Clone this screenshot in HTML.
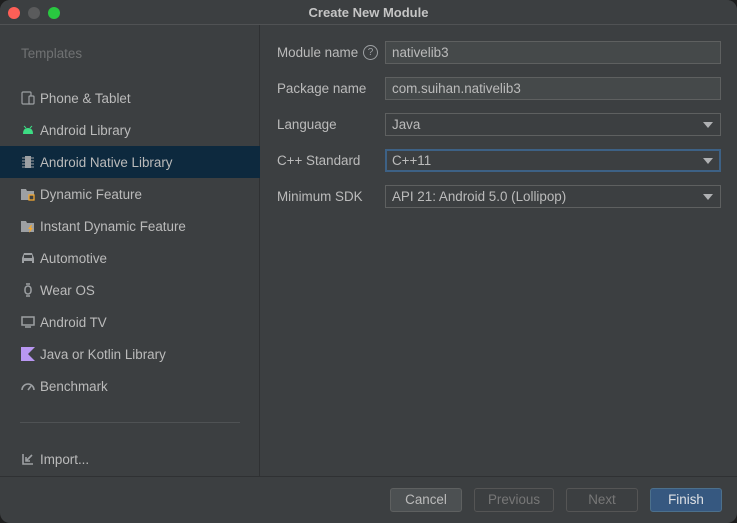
<!DOCTYPE html>
<html><head><style>
*{margin:0;padding:0;box-sizing:border-box}
body{width:737px;height:523px;background:#1e1e1e;font-family:"Liberation Sans",sans-serif;font-size:13px;color:#bbbbbb;overflow:hidden}
.win{position:absolute;left:0;top:0;width:737px;height:523px;background:#3c3f41;border-radius:10px;overflow:hidden}
.title{position:absolute;left:0;top:0;width:737px;height:25px;background:#3c3f41;border-bottom:1px solid #505254;text-align:center;line-height:25px;font-weight:bold;color:#c5c5c5;font-size:13px}
.dot{position:absolute;top:7px;width:12px;height:12px;border-radius:50%}
.left{position:absolute;left:0;top:25px;width:260px;height:451px;border-right:1px solid #2f3133}
.item{position:absolute;left:0;width:260px;height:32px;line-height:33px;padding-left:40px;color:#bbbbbb;font-size:13.4px}
.item.sel{background:#0d293e}
.ic{position:absolute;left:21px;top:9px;width:14px;height:14px}
.lbl{position:absolute;left:277px;height:23px;line-height:24px;font-size:13.4px}
.f{position:absolute;left:385px;width:336px;height:23px;border:1px solid #5e6060;background:#45494a;line-height:22px;padding-left:6px;color:#bbbbbb;font-size:13.4px}
.f.dd{background:#3c3f41}
.f.dd:after{content:"";position:absolute;right:7px;top:8px;border-left:5px solid transparent;border-right:5px solid transparent;border-top:6px solid #afb1b3}
.f.foc{border:2px solid #3d6185;line-height:20px;padding-left:5px}
.f.foc:after{right:6px;top:7px}
.bottom{position:absolute;left:0;top:476px;width:737px;height:47px;border-top:1px solid #2f3133}
.btn{position:absolute;top:488px;height:24px;border:1px solid #5e6060;border-radius:3px;text-align:center;line-height:22px;background:#4c5052;color:#bbbbbb;font-size:13.4px}
.btn.dis{background:#3c3f41;color:#777;border-color:#555}
.btn.pri{background:#365880;border-color:#4c708c;color:#dfe1e5}
.help{position:absolute;left:363px;top:45px;width:15px;height:15px;border:1px solid #9da0a3;border-radius:50%;font-size:10px;line-height:13px;text-align:center;color:#9da0a3}
</style></head><body>
<div class="win">
<div class="title">Create New Module</div>
<div class="dot" style="left:8px;background:#fe5f57"></div>
<div class="dot" style="left:28px;background:#5a5b5c"></div>
<div class="dot" style="left:48px;background:#29c840"></div>
<div class="left">
<div style="position:absolute;left:21px;top:21px;color:#707273;font-size:13.4px">Templates</div>
</div>
<div class="item" style="top:82px"><svg class="ic" viewBox="0 0 14 14"><rect x="1" y="1" width="9" height="12" rx="1" fill="none" stroke="#9da0a3" stroke-width="1.2"/><rect x="8" y="5" width="5" height="8" rx="1" fill="#3c3f41" stroke="#9da0a3" stroke-width="1.2"/></svg>Phone &amp; Tablet</div>
<div class="item" style="top:114px"><svg class="ic" viewBox="0 0 14 14"><path d="M2 11 Q2 5 7 5 Q12 5 12 11Z" fill="#3ddc84"/><path d="M3 3l2 2M11 3l-2 2" stroke="#3ddc84"/></svg>Android Library</div>
<div class="item sel" style="top:146px"><svg class="ic" viewBox="0 0 14 14"><rect x="4" y="1" width="6" height="12" fill="#9da0a3"/><path d="M1 3h12M1 6h12M1 9h12M1 12h12" stroke="#9da0a3" stroke-width="1"/></svg>Android Native Library</div>
<div class="item" style="top:178px"><svg class="ic" viewBox="0 0 14 14"><path d="M0 2h5l1 2h7v9H0z" fill="#9da0a3"/><rect x="8" y="8" width="5" height="5" fill="#3c3f41" stroke="#f0a732" stroke-width="1.3"/></svg>Dynamic Feature</div>
<div class="item" style="top:210px"><svg class="ic" viewBox="0 0 14 14"><path d="M0 2h5l1 2h7v9H0z" fill="#9da0a3"/><path d="M10 6l-3 4h2l-1 4 4-5h-2l1-3z" fill="#f0a732"/></svg>Instant Dynamic Feature</div>
<div class="item" style="top:242px"><svg class="ic" viewBox="0 0 14 14"><path d="M1 12V7l2-5h8l2 5v5h-2v-2H3v2z" fill="#9da0a3"/><rect x="3" y="4" width="8" height="3" fill="#3c3f41"/></svg>Automotive</div>
<div class="item" style="top:274px"><svg class="ic" viewBox="0 0 14 14"><rect x="4" y="3" width="6" height="8" rx="3" fill="none" stroke="#9da0a3" stroke-width="1.5"/><path d="M5 1h4M5 13h4" stroke="#9da0a3" stroke-width="1.5"/></svg>Wear OS</div>
<div class="item" style="top:306px"><svg class="ic" viewBox="0 0 14 14"><rect x="1" y="2" width="12" height="8" fill="none" stroke="#9da0a3" stroke-width="1.5"/><path d="M4 12h6" stroke="#9da0a3" stroke-width="1.5"/></svg>Android TV</div>
<div class="item" style="top:338px"><svg class="ic" viewBox="0 0 14 14"><path d="M0 0h14L7 7l7 7H0z" fill="#b997f2"/></svg>Java or Kotlin Library</div>
<div class="item" style="top:370px"><svg class="ic" viewBox="0 0 14 14"><path d="M1 11a6 6 0 0 1 12 0" fill="none" stroke="#9da0a3" stroke-width="1.6"/><path d="M7 11l3-4" stroke="#9da0a3" stroke-width="1.6"/></svg>Benchmark</div>
<div style="position:absolute;left:20px;top:422px;width:220px;height:1px;background:#4f5254"></div>
<div class="item" style="top:443px"><svg class="ic" viewBox="0 0 14 14"><path d="M2 2v10h10" fill="none" stroke="#9da0a3" stroke-width="1.6"/><path d="M11 3L5 9M5 5v4h4" fill="none" stroke="#9da0a3" stroke-width="1.6"/></svg>Import...</div>

<div class="lbl" style="top:41px">Module name</div>
<div class="help">?</div>
<div class="f" style="top:41px">nativelib3</div>
<div class="lbl" style="top:77px">Package name</div>
<div class="f" style="top:77px">com.suihan.nativelib3</div>
<div class="lbl" style="top:113px">Language</div>
<div class="f dd" style="top:113px">Java</div>
<div class="lbl" style="top:149px">C++ Standard</div>
<div class="f dd foc" style="top:149px">C++11</div>
<div class="lbl" style="top:185px">Minimum SDK</div>
<div class="f dd" style="top:185px">API 21: Android 5.0 (Lollipop)</div>

<div class="bottom"></div>
<div class="btn" style="left:390px;width:72px">Cancel</div>
<div class="btn dis" style="left:474px;width:80px">Previous</div>
<div class="btn dis" style="left:566px;width:72px">Next</div>
<div class="btn pri" style="left:650px;width:72px">Finish</div>
</div>
</body></html>
